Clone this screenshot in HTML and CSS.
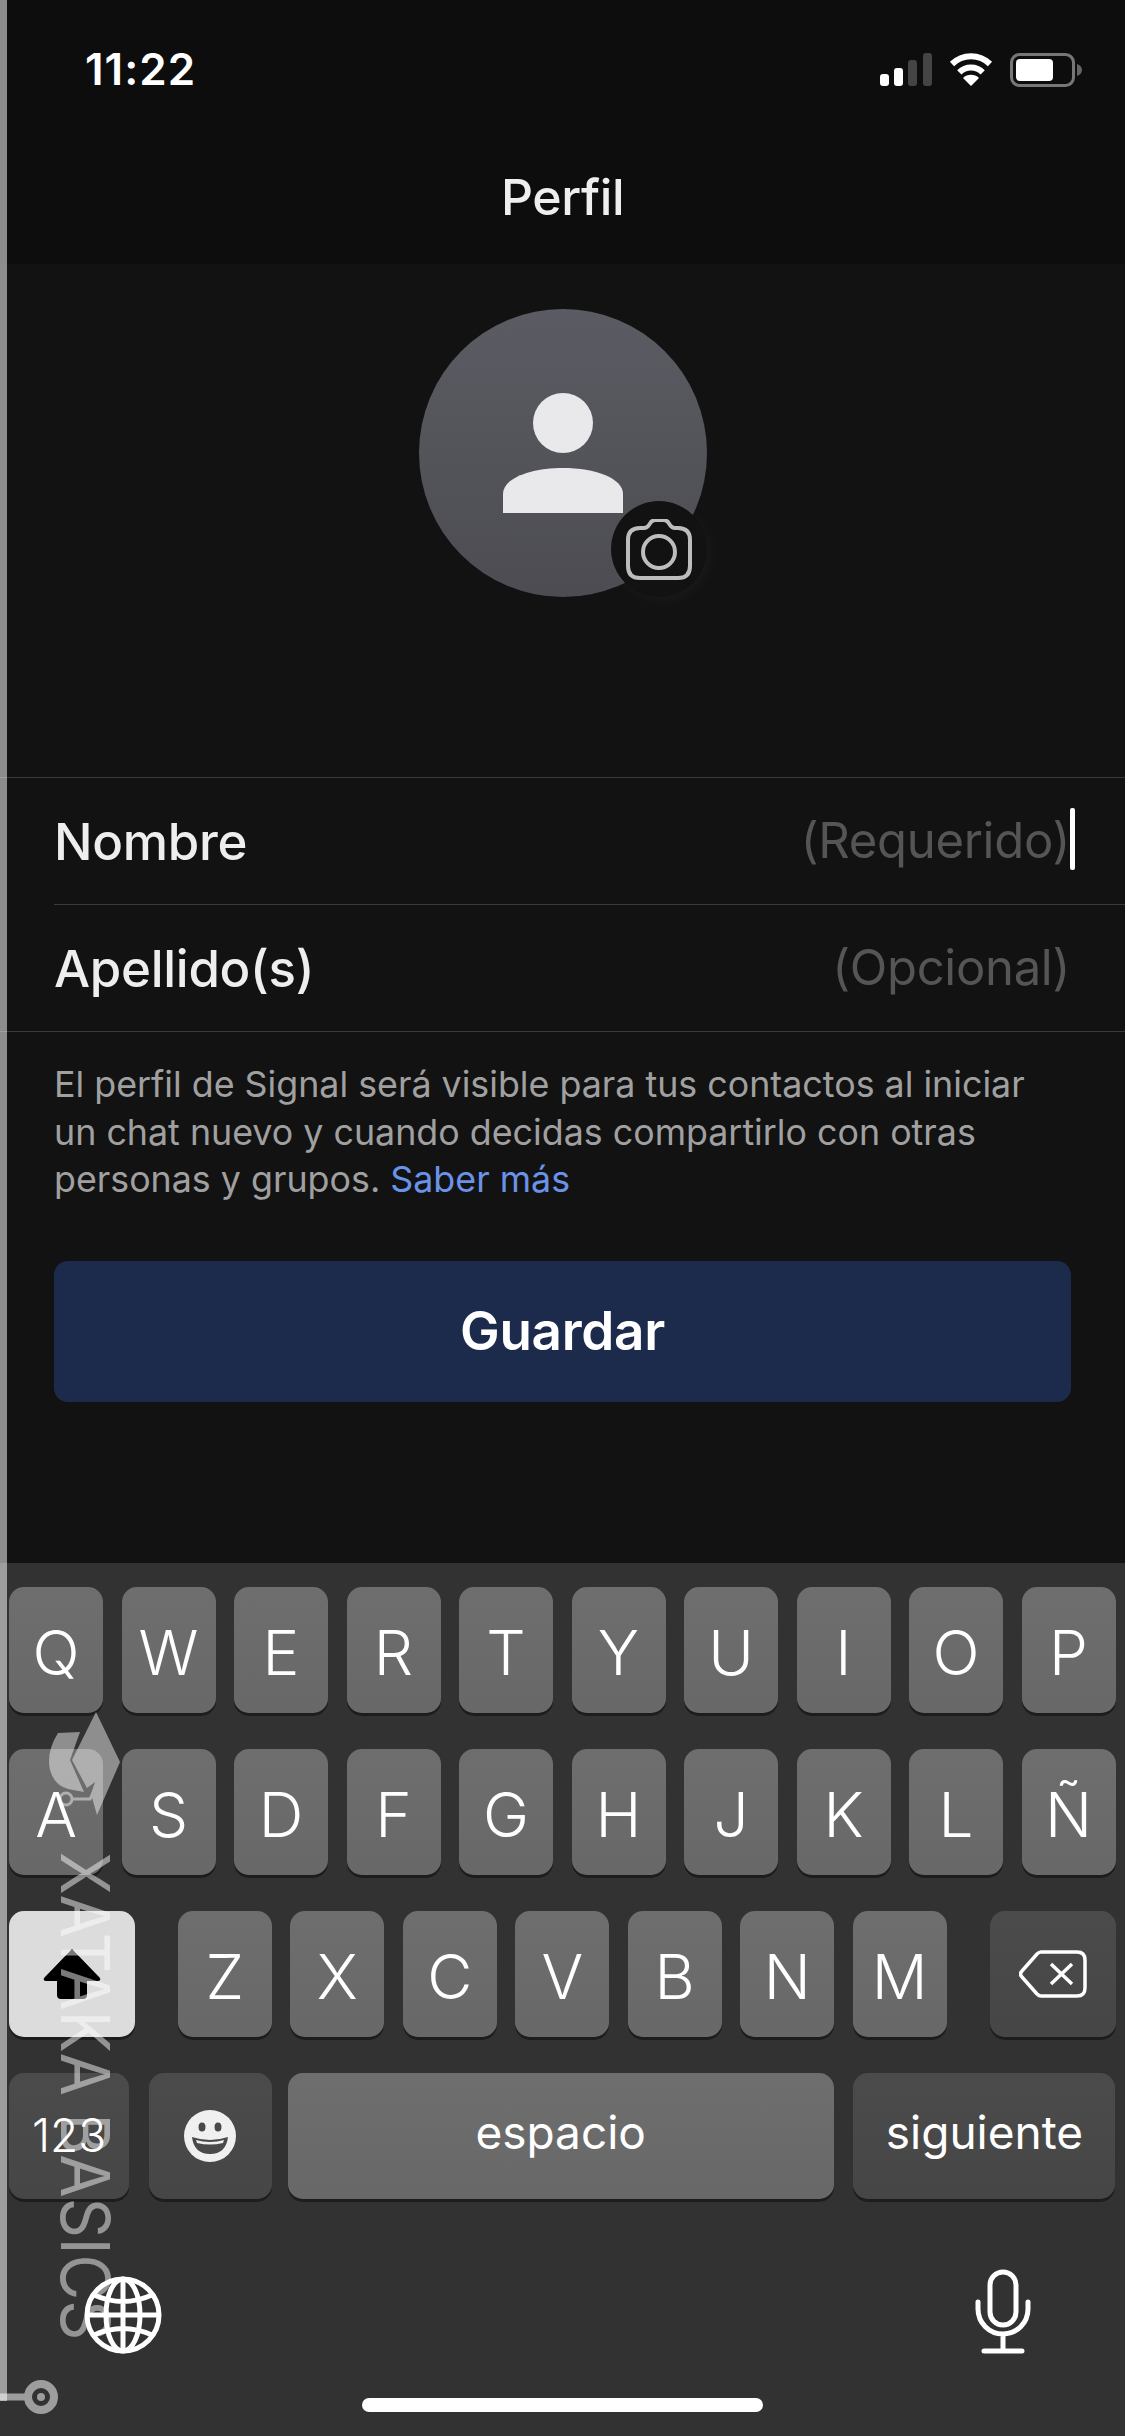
FILE: index.html
```html
<!DOCTYPE html>
<html lang="es">
<head>
<meta charset="utf-8">
<title>Perfil</title>
<link rel="stylesheet" href="styles.css">
</head>
<body>
<div class="app">
  <header class="top">
    <div class="status">
      <span class="time">11:22</span>
      <div class="status-icons">
        <svg class="signal" width="52" height="33" viewBox="0 0 52 33"><rect x="0" y="21" width="9" height="12" rx="3" fill="#fff"/><rect x="14" y="15" width="9" height="18" rx="3" fill="#fff"/><rect x="28" y="7" width="9" height="26" rx="3" fill="#444"/><rect x="43" y="0" width="9" height="33" rx="3" fill="#444"/></svg>
        <svg class="wifi" width="46" height="33" viewBox="0 0 46 33"><path d="M4 11A27 27 0 0 1 42 11" fill="none" stroke="#fff" stroke-width="6"/><path d="M11.300 19.300A16.500 16.500 0 0 1 34.700 19.300" fill="none" stroke="#fff" stroke-width="6"/><path d="M23 33L15 25A11.500 11.500 0 0 1 31 25Z" fill="#fff"/></svg>
        <svg class="battery" width="72" height="34" viewBox="0 0 72 34"><rect x="1.500" y="1.500" width="62" height="31" rx="8" fill="none" stroke="#777" stroke-width="3"/><rect x="6" y="6" width="37" height="22" rx="4" fill="#fff"/><path d="M67 11C70 12 72 14 72 17C72 20 70 22 67 23Z" fill="#666"/></svg>
      </div>
    </div>
    <div class="nav"><h1 class="title">Perfil</h1></div>
  </header>

  <section class="avatar-area">
    <div class="avatar">
      <svg class="person" width="120" height="120" viewBox="0 0 120 120"><circle cx="60" cy="30" r="30" fill="#e9e9eb"/><path d="M0 120V101C0 85 28 75 60 75S120 85 120 101V120Z" fill="#e9e9eb"/></svg>
      <div class="cam-badge">
        <svg width="66" height="61" viewBox="0 0 66 61"><path d="M14 9H18Q21 9 23 6L25 3Q27 1 30 1H37Q40 1 42 3L44 6Q46 9 49 9H52Q64 9 64 21V47Q64 59 52 59H14Q2 59 2 47V21Q2 9 14 9Z" fill="none" stroke="#bdbdbd" stroke-width="4"/><circle cx="33" cy="33" r="16" fill="none" stroke="#bdbdbd" stroke-width="4"/></svg>
      </div>
    </div>
  </section>

  <section class="form">
    <div class="row">
      <span class="label">Nombre</span>
      <span class="field"><span class="placeholder">(Requerido)</span><i class="caret"></i></span>
    </div>
    <div class="row">
      <span class="label">Apellido(s)</span>
      <span class="field"><span class="placeholder">(Opcional)</span></span>
    </div>
  </section>

  <p class="help">El perfil de Signal será visible para tus contactos al iniciar<br>un chat nuevo y cuando decidas compartirlo con otras<br>personas y grupos. <a class="link">Saber más</a></p>

  <button class="save">Guardar</button>

  <section class="keyboard">
    <div class="keys">
      <div class="kb-row">
        <span class="key">Q</span><span class="key">W</span><span class="key">E</span><span class="key">R</span><span class="key">T</span><span class="key">Y</span><span class="key">U</span><span class="key">I</span><span class="key">O</span><span class="key">P</span>
      </div>
      <div class="kb-row">
        <span class="key">A</span><span class="key">S</span><span class="key">D</span><span class="key">F</span><span class="key">G</span><span class="key">H</span><span class="key">J</span><span class="key">K</span><span class="key">L</span><span class="key">Ñ</span>
      </div>
      <div class="kb-row row-shift">
        <span class="key key-wide key-shift">
          <svg width="58" height="50" viewBox="0 0 58 50"><path d="M29 0L57 29Q58 32 55 32H44V46Q44 50 40 50H18Q14 50 14 46V32H3Q0 32 1 29Z" fill="#000"/></svg>
        </span>
        <div class="letters">
          <span class="key">Z</span><span class="key">X</span><span class="key">C</span><span class="key">V</span><span class="key">B</span><span class="key">N</span><span class="key">M</span>
        </div>
        <span class="key key-wide key-dark">
          <svg width="68" height="48" viewBox="0 0 68 48"><path d="M22 2H58Q66 2 66 10V38Q66 46 58 46H22Q20 46 18 44L3 27Q0 24 3 21L18 4Q20 2 22 2Z" fill="none" stroke="#fff" stroke-width="3.500"/><path d="M32 14L53 34M53 14L32 34" stroke="#fff" stroke-width="3.500" fill="none"/></svg>
        </span>
      </div>
      <div class="kb-row row-bottom">
        <span class="key key-dark key-small key-num">123</span>
        <span class="key key-dark key-emoji">
          <svg width="52" height="52" viewBox="0 0 52 52"><circle cx="26" cy="26" r="26" fill="#f0f0f0"/><ellipse cx="18" cy="17" rx="3.500" ry="4.500" fill="#4a4a4a"/><ellipse cx="34" cy="17" rx="3.500" ry="4.500" fill="#4a4a4a"/><path d="M8 27Q26 33 44 27Q42 44 26 44Q10 44 8 27Z" fill="#4a4a4a"/><path d="M12 30Q26 34 40 30L39 33Q26 36 13 33Z" fill="#f0f0f0"/></svg>
        </span>
        <span class="key key-small key-space">espacio</span>
        <span class="key key-dark key-small key-next">siguiente</span>
      </div>
    </div>
    <div class="kb-footer">
      <svg width="78" height="78" viewBox="0 0 78 78" fill="none" stroke="#fff" stroke-width="5"><circle cx="39" cy="39" r="36"/><ellipse cx="39" cy="39" rx="17" ry="36"/><path d="M39 3V75M3 39H75M10 19Q39 32 68 19M10 59Q39 46 68 59"/></svg>
      <svg width="56" height="85" viewBox="0 0 56 85" fill="none" stroke="#fff" stroke-width="5" stroke-linecap="round"><rect x="15" y="3" width="26" height="53" rx="13"/><path d="M3 33V40A25 25 0 0 0 53 40V33M28 65V82M9 82H47"/></svg>
    </div>
    <div class="home"></div>
  </section>

  <div class="wm-strip"></div>
  <svg class="wm-logo" width="130" height="130" viewBox="0 0 130 130"><path d="M96 12L120 62L97 115L91 94L95 82L87 88L72 60Z" fill="#fff"/><path d="M80 32L58 33Q46 52 50 70Q54 85 68 89L84 92L70 60Z" fill="#fff"/><circle cx="66" cy="99" r="6" fill="none" stroke="#fff" stroke-width="3"/><path d="M72 99H90L97 85" fill="none" stroke="#fff" stroke-width="3"/></svg>
  <span class="wm-text">XATAKA BASICS</span>
  <svg class="wm-pin" width="60" height="36" viewBox="0 0 60 36"><path d="M0 18H26" stroke="#fff" stroke-width="7"/><circle cx="41" cy="18" r="13" fill="none" stroke="#fff" stroke-width="8"/><circle cx="41" cy="18" r="4" fill="#fff"/></svg>
</div>
</body>
</html>
```
FILE: styles.css
```css
* { box-sizing: border-box; }
html, body { margin: 0; padding: 0; background: #121212; }
.app {
  position: relative;
  width: 1125px;
  height: 2436px;
  overflow: hidden;
  display: flex;
  flex-direction: column;
  background: #121212;
  color: #eee;
  font-family: Inter, "Liberation Sans", sans-serif;
}
.top { height: 264px; background: #0d0d0d; flex: none; }
.status {
  height: 132px;
  padding: 47px 43px 0 85px;
  display: flex;
  justify-content: space-between;
  align-items: flex-start;
}
.time { font-size: 44px; line-height: 44px; font-weight: 600; color: #fff; letter-spacing: 1px; }
.status-icons { display: flex; align-items: flex-start; gap: 16px; padding-top: 6px; }
.nav { height: 132px; display: flex; align-items: center; justify-content: center; padding-bottom: 2px; }
.title { margin: 0; font-size: 50px; font-weight: 500; line-height: 1; color: #eee; letter-spacing: -.4px; }

.avatar-area { height: 513px; padding-top: 45px; display: flex; justify-content: center; flex: none; }
.avatar {
  position: relative;
  width: 288px;
  height: 288px;
  border-radius: 50%;
  background: linear-gradient(#5b5b63, #4c4c52);
  display: flex;
  align-items: flex-start;
  justify-content: center;
  padding-top: 84px;
}
.cam-badge {
  position: absolute;
  right: 0;
  bottom: 0;
  width: 96px;
  height: 96px;
  border-radius: 50%;
  background: #121212;
  box-shadow: 4px 4px 14px rgba(255,255,255,.035);
  display: flex;
  align-items: center;
  justify-content: center;
}

.form { flex: none; border-top: 1px solid #3a3a3a; border-bottom: 1px solid #3a3a3a; }
.row {
  height: 126px;
  display: flex;
  align-items: center;
  justify-content: space-between;
  margin-left: 54px;
  padding-right: 55px;
}
.row + .row { height: 127px; border-top: 1px solid #3a3a3a; }
.label { font-size: 51px; font-weight: 500; color: #eee; letter-spacing: -.3px; }
.field { display: flex; align-items: center; position: relative; padding-bottom: 2px; }
.placeholder { font-size: 49px; font-weight: 400; color: #555; letter-spacing: -.3px; }
.caret { position: absolute; right: -5px; top: -3px; width: 5px; height: 62px; border-radius: 2px; background: #fff; }

.help { margin: 29px 0 0 54px; font-size: 35.800px; line-height: 47.500px; color: #a0a0a0; flex: none; }
.link { color: #6a92e8; }

.save {
  flex: none;
  margin: 57px 54px 0 54px;
  height: 141px;
  border: 0;
  border-radius: 14px;
  background: #1c2a4c;
  color: #fff;
  font-family: inherit;
  font-size: 53px;
  font-weight: 600;
  letter-spacing: -.3px;
}

.keyboard {
  flex: 1;
  margin-top: 161px;
  background: #323232;
  padding-top: 24px;
  display: flex;
  flex-direction: column;
}
.keys { display: flex; flex-direction: column; gap: 36px; padding: 0 9.500px 0 9px; }
.kb-row { display: flex; gap: 18.500px; height: 126px; }
.key {
  flex: none;
  width: 94px;
  height: 126px;
  padding-top: 5px;
  border-radius: 15px;
  background: linear-gradient(#6e6e6e, #686868);
  box-shadow: 0 3px 0 #1d1d1d;
  color: #fff;
  font-size: 62px;
  font-weight: 300;
  display: flex;
  align-items: center;
  justify-content: center;
}
.key-dark { background: linear-gradient(#4b4b4b, #464646); padding-top: 0; }
.row-shift { justify-content: space-between; gap: 0; }
.letters { display: flex; gap: 18.500px; }
.key-wide { width: 126px; }
.key-shift { background: #dcdcdc; padding-top: 0; }
.key-small { font-size: 46px; font-weight: 400; padding: 0 0 7px; }
.row-bottom { gap: 0; justify-content: space-between; }
.key-num { width: 120px; font-size: 46px; font-weight: 300; padding-bottom: 1px; }
.key-emoji { width: 123px; }
.key-space { width: 546px; margin-left: -4px; margin-right: 0; }
.key-next { width: 262px; }

.kb-footer {
  display: flex;
  justify-content: space-between;
  align-items: flex-end;
  padding: 0 94px 0 84px;
  margin-top: 70px;
}
.home { width: 401px; height: 14px; border-radius: 7px; background: #fff; margin: 44px auto 0; flex: none; }

.wm-strip { position: absolute; left: 0; top: 0; width: 7px; height: 2401px; background: rgba(255,255,255,.52); }
.wm-logo { position: absolute; left: 0; top: 1700px; opacity: .45; }
.wm-pin { position: absolute; left: 0; top: 2379px; opacity: .52; }
.wm-text {
  position: absolute;
  left: 120px;
  top: 1852px;
  transform-origin: 0 0;
  transform: rotate(90deg) scaleX(.92);
  font-size: 68px;
  line-height: 1;
  font-weight: 400;
  white-space: nowrap;
  color: rgba(255,255,255,.48);
}
```
